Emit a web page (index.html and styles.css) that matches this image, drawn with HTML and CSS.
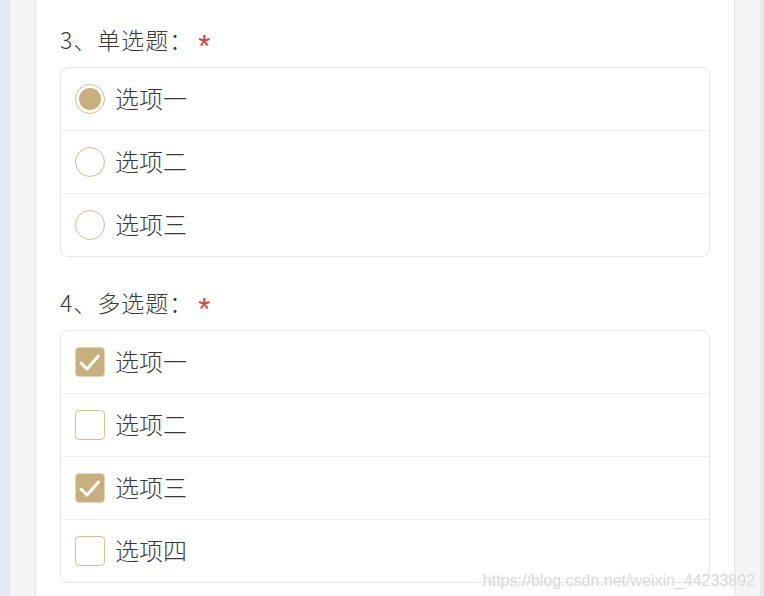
FILE: index.html
```html
<!DOCTYPE html>
<html lang="zh-CN">
<head>
    <meta charset="UTF-8">
    <meta name="viewport" content="width=device-width, initial-scale=1.0">
    <title>问卷</title>
    <link rel="stylesheet" href="styles.css">
</head>
<body>
    <div class="page">
        <div class="panel">
            <!-- 单选题 -->
            <div class="question">
                <div class="q-title">3、单选题：<span class="required">*</span></div>
                <div class="options">
                    <label class="option">
                        <span class="radio checked"></span>
                        <span class="option-text">选项一</span>
                    </label>
                    <label class="option">
                        <span class="radio"></span>
                        <span class="option-text">选项二</span>
                    </label>
                    <label class="option">
                        <span class="radio"></span>
                        <span class="option-text">选项三</span>
                    </label>
                </div>
            </div>

            <!-- 多选题 -->
            <div class="question">
                <div class="q-title">4、多选题：<span class="required">*</span></div>
                <div class="options">
                    <label class="option">
                        <span class="checkbox checked">
                            <svg viewBox="0 0 28 28"><polyline points="5,15 11,21 22.5,8"/></svg>
                        </span>
                        <span class="option-text">选项一</span>
                    </label>
                    <label class="option">
                        <span class="checkbox"></span>
                        <span class="option-text">选项二</span>
                    </label>
                    <label class="option">
                        <span class="checkbox checked">
                            <svg viewBox="0 0 28 28"><polyline points="5,15 11,21 22.5,8"/></svg>
                        </span>
                        <span class="option-text">选项三</span>
                    </label>
                    <label class="option">
                        <span class="checkbox"></span>
                        <span class="option-text">选项四</span>
                    </label>
                </div>
            </div>
        </div>
    </div>

    <div class="watermark">https://blog.csdn.net/weixin_44233892</div>
</body>
</html>
```

FILE: styles.css
```css
html, body {
    height: 100%;
}
body {
    margin: 0;
    overflow: hidden;
    background-color: #e5e8f2;
    font-family: "Noto Sans CJK SC", "Noto Sans", sans-serif;
    font-weight: 300;
    color: #3a3a3a;
    display: flex;
}
.page {
    flex: 1;
    margin: 0 4px 0 10px;
    padding: 0 25px;
    background-color: #f5f5f5;
    display: flex;
}
.panel {
    flex: 1;
    background-color: #fff;
    border-left: 1px solid #e2e2e2;
    border-right: 1px solid #e2e2e2;
    padding: 24px 24px 0;
}
.question + .question {
    margin-top: 30px;
}
.q-title {
    font-size: 23px;
    letter-spacing: 1px;
    line-height: 30px;
    height: 30px;
    margin-bottom: 13px;
}
.required {
    color: #e03c3c;
    font-family: "Liberation Sans", Arial, sans-serif;
    font-weight: 400;
    font-size: 31px;
    line-height: 1;
    vertical-align: -8px;
    margin-left: 5px;
}
.options {
    border: 1px solid #e6e6e6;
    border-radius: 8px;
}
.option {
    display: flex;
    align-items: center;
    height: 62px;
    padding-left: 14px;
    cursor: pointer;
}
.option + .option {
    border-top: 1px solid #eeeeee;
}
.option-text {
    font-size: 24px;
    line-height: 30px;
    margin-left: 10px;
    margin-top: -2px;
}
.radio {
    width: 30px;
    height: 30px;
    box-sizing: border-box;
    border: 1px solid #d2bb8c;
    border-radius: 50%;
    display: flex;
    align-items: center;
    justify-content: center;
}
.radio.checked::after {
    content: "";
    width: 22px;
    height: 22px;
    border-radius: 50%;
    background-color: #c8b07e;
}
.checkbox {
    width: 30px;
    height: 30px;
    box-sizing: border-box;
    border: 1px solid #d6c295;
    border-radius: 4px;
    display: flex;
}
.checkbox.checked {
    background-color: #c8b07e;
    border-color: #e3d5b5;
}
.checkbox svg {
    width: 28px;
    height: 28px;
}
.checkbox polyline {
    fill: none;
    stroke: #fff;
    stroke-width: 3;
    stroke-linecap: round;
    stroke-linejoin: round;
}
.watermark {
    position: absolute;
    right: 9px;
    bottom: 6px;
    font-family: "Liberation Sans", Arial, sans-serif;
    font-size: 16px;
    color: #d9d9d9;
    text-shadow: 0 0 1px #fff;
}
```
